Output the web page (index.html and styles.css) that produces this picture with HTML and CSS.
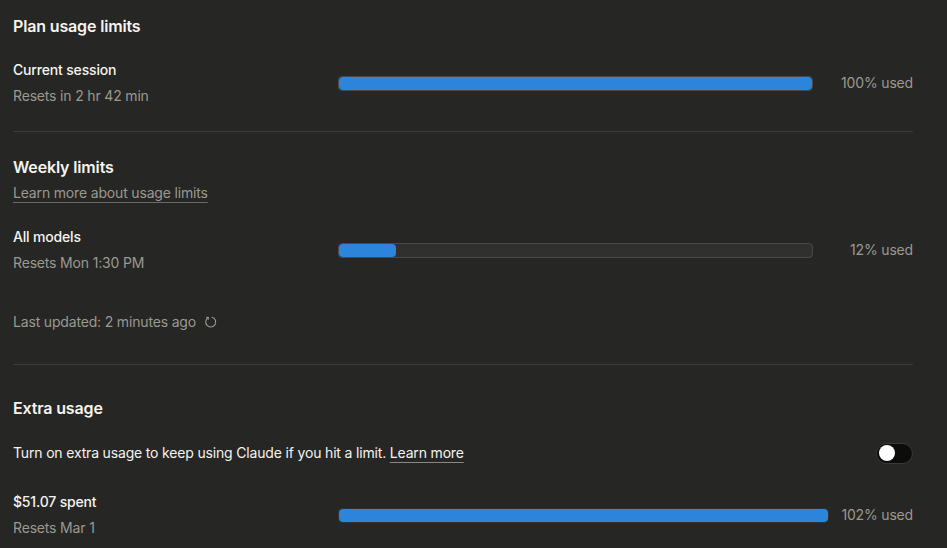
FILE: index.html
```html
<!DOCTYPE html>
<html lang="en">
<head>
<meta charset="utf-8">
<title>Usage</title>
<link rel="stylesheet" href="styles.css">
</head>
<body>
<main class="page">
  <section class="section section-first">
    <h2 class="title">Plan usage limits</h2>
    <div class="usage-row">
      <div class="info">
        <div class="name">Current session</div>
        <div class="sub">Resets in 2 hr 42 min</div>
      </div>
      <div class="track"><div class="fill" style="width:100%"></div></div>
      <div class="pct">100% used</div>
    </div>
  </section>
  <hr class="divider">
  <section class="section section-weekly">
    <h2 class="title">Weekly limits</h2>
    <a class="learn" href="#">Learn more about usage limits</a>
    <div class="usage-row usage-row-weekly">
      <div class="info">
        <div class="name">All models</div>
        <div class="sub">Resets Mon 1:30 PM</div>
      </div>
      <div class="track"><div class="fill" style="width:12%"></div></div>
      <div class="pct">12% used</div>
    </div>
    <div class="updated">
      <span>Last updated: 2 minutes ago</span>
      <svg class="refresh" width="14" height="14" viewBox="0 0 14 14" fill="none" stroke="currentColor" stroke-width="1.1" stroke-linecap="round" stroke-linejoin="round">
        <path d="M4.3 2.6 A5 5 0 1 0 8.2 2.2"/>
        <path d="M2.6 2.3 L4.3 2.6 L4.1 4.4"/>
      </svg>
    </div>
  </section>
  <hr class="divider">
  <section class="section section-extra">
    <h2 class="title">Extra usage</h2>
    <div class="extra-row">
      <p class="extra-text">Turn on extra usage to keep using Claude if you hit a limit. <a class="extra-link" href="#">Learn more</a></p>
      <span class="toggle"><span class="knob"></span></span>
    </div>
    <div class="usage-row usage-row-extra">
      <div class="info">
        <div class="name">$51.07 spent</div>
        <div class="sub">Resets Mar 1</div>
      </div>
      <div class="track track-full"><div class="fill" style="width:100%"></div></div>
      <div class="pct">102% used</div>
    </div>
  </section>
</main>
</body>
</html>
```
FILE: styles.css
```css
* { box-sizing: border-box; }
html, body {
  margin: 0;
  padding: 0;
  background: #262624;
}
body {
  font-family: Inter, "Noto Sans", "Liberation Sans", sans-serif;
  color: #f5f4ef;
  font-size: 14px;
  letter-spacing: -0.17px;
  overflow: hidden;
}
.page {
  padding: 14px 34px 0 13px;
}
.title {
  margin: 0;
  font-size: 16px;
  line-height: 24px;
  font-weight: 600;
  letter-spacing: -0.15px;
}
.usage-row {
  display: grid;
  grid-template-columns: 325px 1fr 100px;
  align-items: center;
  margin-top: 21px;
}
.usage-row-weekly { margin-top: 22px; }
.usage-row-extra {
  margin-top: 27px;
  grid-template-columns: 325px 1fr 84px;
}
.info {
  display: flex;
  flex-direction: column;
  gap: 4px;
}
.name {
  line-height: 22px;
  font-weight: 500;
}
.sub {
  line-height: 22px;
  color: #9b9990;
}
.track {
  height: 15px;
  border-radius: 4px;
  background: #30302e;
  border: 1px solid #4a4945;
  overflow: hidden;
}
.track-full { border-color: transparent; }
.fill {
  height: 100%;
  background: #2c84db;
  border-radius: 4px;
}
.pct {
  text-align: right;
  color: #9b9990;
  line-height: 22px;
}
.divider {
  border: 0;
  height: 1px;
  background: #3b3b38;
  margin: 24px 0 0;
}
.section-weekly { padding-top: 23px; }
.learn {
  display: inline-block;
  margin-top: 3px;
  line-height: 22px;
  color: #9b9990;
  text-decoration: underline;
  text-decoration-color: #6c6a64;
  text-underline-offset: 4px;
}
.updated {
  display: flex;
  align-items: center;
  gap: 8px;
  margin-top: 37px;
  line-height: 22px;
  color: #9b9990;
}
.refresh { color: #9b9990; }
.section-extra { padding-top: 31px; }
.section-weekly + .divider { margin-top: 31px; }
.extra-row {
  display: flex;
  align-items: center;
  justify-content: space-between;
  margin-top: 22px;
}
.extra-text {
  margin: 0;
  line-height: 22px;
}
.extra-link {
  color: #f5f4ef;
  text-decoration: underline;
  text-decoration-color: #8a8882;
  text-underline-offset: 4px;
}
.toggle {
  width: 37px;
  height: 21px;
  border-radius: 11px;
  background: #0c0c0b;
  border: 1px solid #3a3a37;
  display: flex;
  align-items: center;
  padding-left: 2px;
}
.knob {
  width: 16px;
  height: 16px;
  border-radius: 50%;
  background: #ffffff;
}
```
